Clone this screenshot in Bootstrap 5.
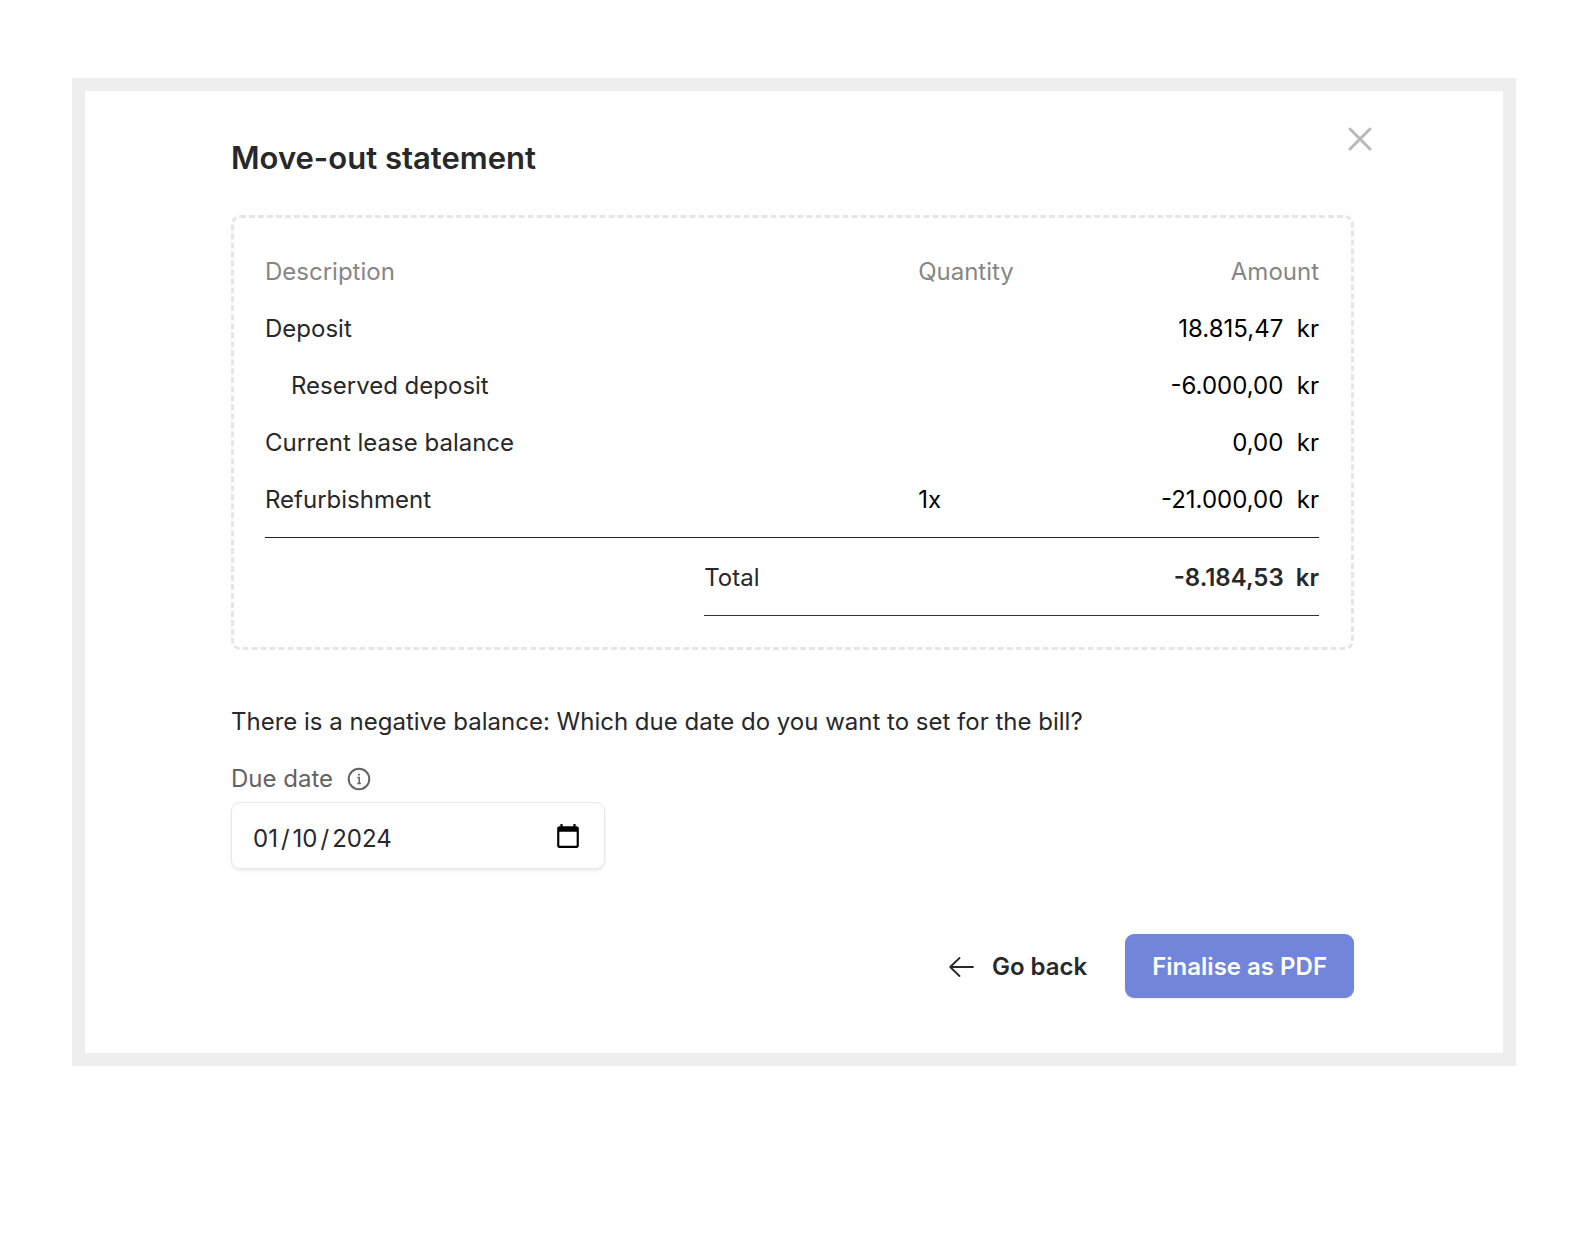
<!DOCTYPE html>
<html lang="en">
<head>
<meta charset="utf-8">
<meta name="viewport" content="width=device-width, initial-scale=1">
<title>Move-out statement</title>
<link href="https://cdn.jsdelivr.net/npm/bootstrap@5.3.0/dist/css/bootstrap.min.css" rel="stylesheet">
<style>
  body { font-family: Inter, "Noto Sans", sans-serif; font-size: 24px; line-height: 33px; color: #27282a; background: #fff; }
  .page-wrap { padding: 78px 70px 78px 72px; }
  .dialog-frame { border: 13px solid #eee; padding: 47px 128px 55px 146px; }
  .dialog-inner { margin-right: 21px; }
  .dialog-title { font-size: 31px; line-height: 40px; font-weight: 600; }
  .close-btn { line-height: 0; padding: 3px; margin-top: -14px; }
  .statement { border: 3px dashed #e6e6e6; border-radius: 9px; padding: 25px 32px 31px 31px; margin-top: 37px; }
  .items { table-layout: fixed; width: 100%; }
  .items th, .items td { padding: 12px 0; font-weight: 400; white-space: pre; }
  .items thead th { color: #868686; }
  .items .num { color: #000; }
  .items .sub { padding-left: 26px; }
  .items .last > * { padding-bottom: 21px; border-bottom: 1px solid #222; }
  .items tfoot .sum { padding: 23px 0 21px; border-bottom: 1px solid #333; }
  .items tfoot td.sum { font-weight: 600; }
  .c-a { width: 41.67%; } .c-b { width: 20.3%; } .c-c { width: 12%; }
  .question { margin: 55px 0 24px; }
  .due-label { color: #636363; gap: 14px; }
  .date-box { height: 67px; margin-top: 7px; padding: 6px 23px 0 21px; font-size: 24px; color: #27282a; border: 1px solid #e9e9e9; border-radius: 9px; box-shadow: 0 2px 3px rgba(0,0,0,.08); }
  .date-box::-webkit-datetime-edit-text { padding: 0 3px; }
  .date-box::-webkit-calendar-picker-indicator { width: 26px; height: 26px; padding: 0; margin: 0 0 6px; background-size: 26px 26px; }
  .actions { margin-top: 65px; gap: 38px; }
  .back-btn, .final-btn { font-size: 24px; line-height: 34px; font-weight: 600; border: 0; }
  .back-btn { color: #27282a; gap: 18px; padding: 16px 0 14px; }
  .final-btn { padding: 16px 27px 14px; border-radius: 9px; color: #fff; background: #7185da; box-shadow: 0 1px 2px rgba(0,0,0,.08); }
  .final-btn:hover { color: #fff; background: #6175ca; }
</style>
</head>
<body>
<div class="page-wrap">
  <main class="dialog-frame">
    <div class="d-flex justify-content-between align-items-start">
      <h1 class="dialog-title mb-0">Move-out statement</h1>
      <button type="button" class="btn border-0 close-btn" aria-label="Close">
        <svg width="24" height="24" viewBox="0 0 24 24" fill="none" stroke="#b8b8b8" stroke-width="3" stroke-linecap="round"><path d="M2 2l20 20M22 2L2 22"/></svg>
      </button>
    </div>
    <div class="dialog-inner">
      <section class="statement">
        <table class="items">
          <colgroup><col class="c-a"><col class="c-b"><col class="c-c"><col></colgroup>
          <thead>
            <tr><th scope="col" colspan="2">Description</th><th scope="col">Quantity</th><th scope="col" class="text-end">Amount</th></tr>
          </thead>
          <tbody>
            <tr><td colspan="2">Deposit</td><td></td><td class="num text-end">18.815,47  kr</td></tr>
            <tr><td colspan="2" class="sub">Reserved deposit</td><td></td><td class="num text-end">-6.000,00  kr</td></tr>
            <tr><td colspan="2">Current lease balance</td><td></td><td class="num text-end">0,00  kr</td></tr>
            <tr class="last"><td colspan="2">Refurbishment</td><td class="num">1x</td><td class="num text-end">-21.000,00  kr</td></tr>
          </tbody>
          <tfoot>
            <tr><td></td><th scope="row" class="sum" colspan="2">Total</th><td class="sum text-end">-8.184,53  kr</td></tr>
          </tfoot>
        </table>
      </section>
      <p class="question">There is a negative balance: Which due date do you want to set for the bill?</p>
      <div class="row g-0">
        <div class="col-4">
          <label for="due" class="due-label d-flex align-items-center">Due date
            <svg width="24" height="24" viewBox="0 0 24 24" fill="none" stroke="#636363" stroke-width="2"><circle cx="12" cy="12" r="10.3"/><path d="M10.400 10.600h1.800v5.600M10.300 16.500h3.600" stroke-width="1.500"/><path d="M11 7.600h1.800" stroke-width="1.900"/></svg>
          </label>
          <input type="date" id="due" class="form-control date-box" value="2024-01-10">
        </div>
      </div>
      <div class="actions d-flex justify-content-end align-items-center">
        <button type="button" class="btn back-btn d-flex align-items-center">
          <svg width="25" height="20" viewBox="0 0 25 20" fill="none" stroke="#27282a" stroke-width="1.8" stroke-linecap="round" stroke-linejoin="round"><path d="M24 10H1.200M10.500 1L1.200 10l9.300 9"/></svg>
          Go back
        </button>
        <button type="button" class="btn final-btn">Finalise as PDF</button>
      </div>
    </div>
  </main>
</div>
<script src="https://cdn.jsdelivr.net/npm/bootstrap@5.3.0/dist/js/bootstrap.bundle.min.js"></script>
</body>
</html>
